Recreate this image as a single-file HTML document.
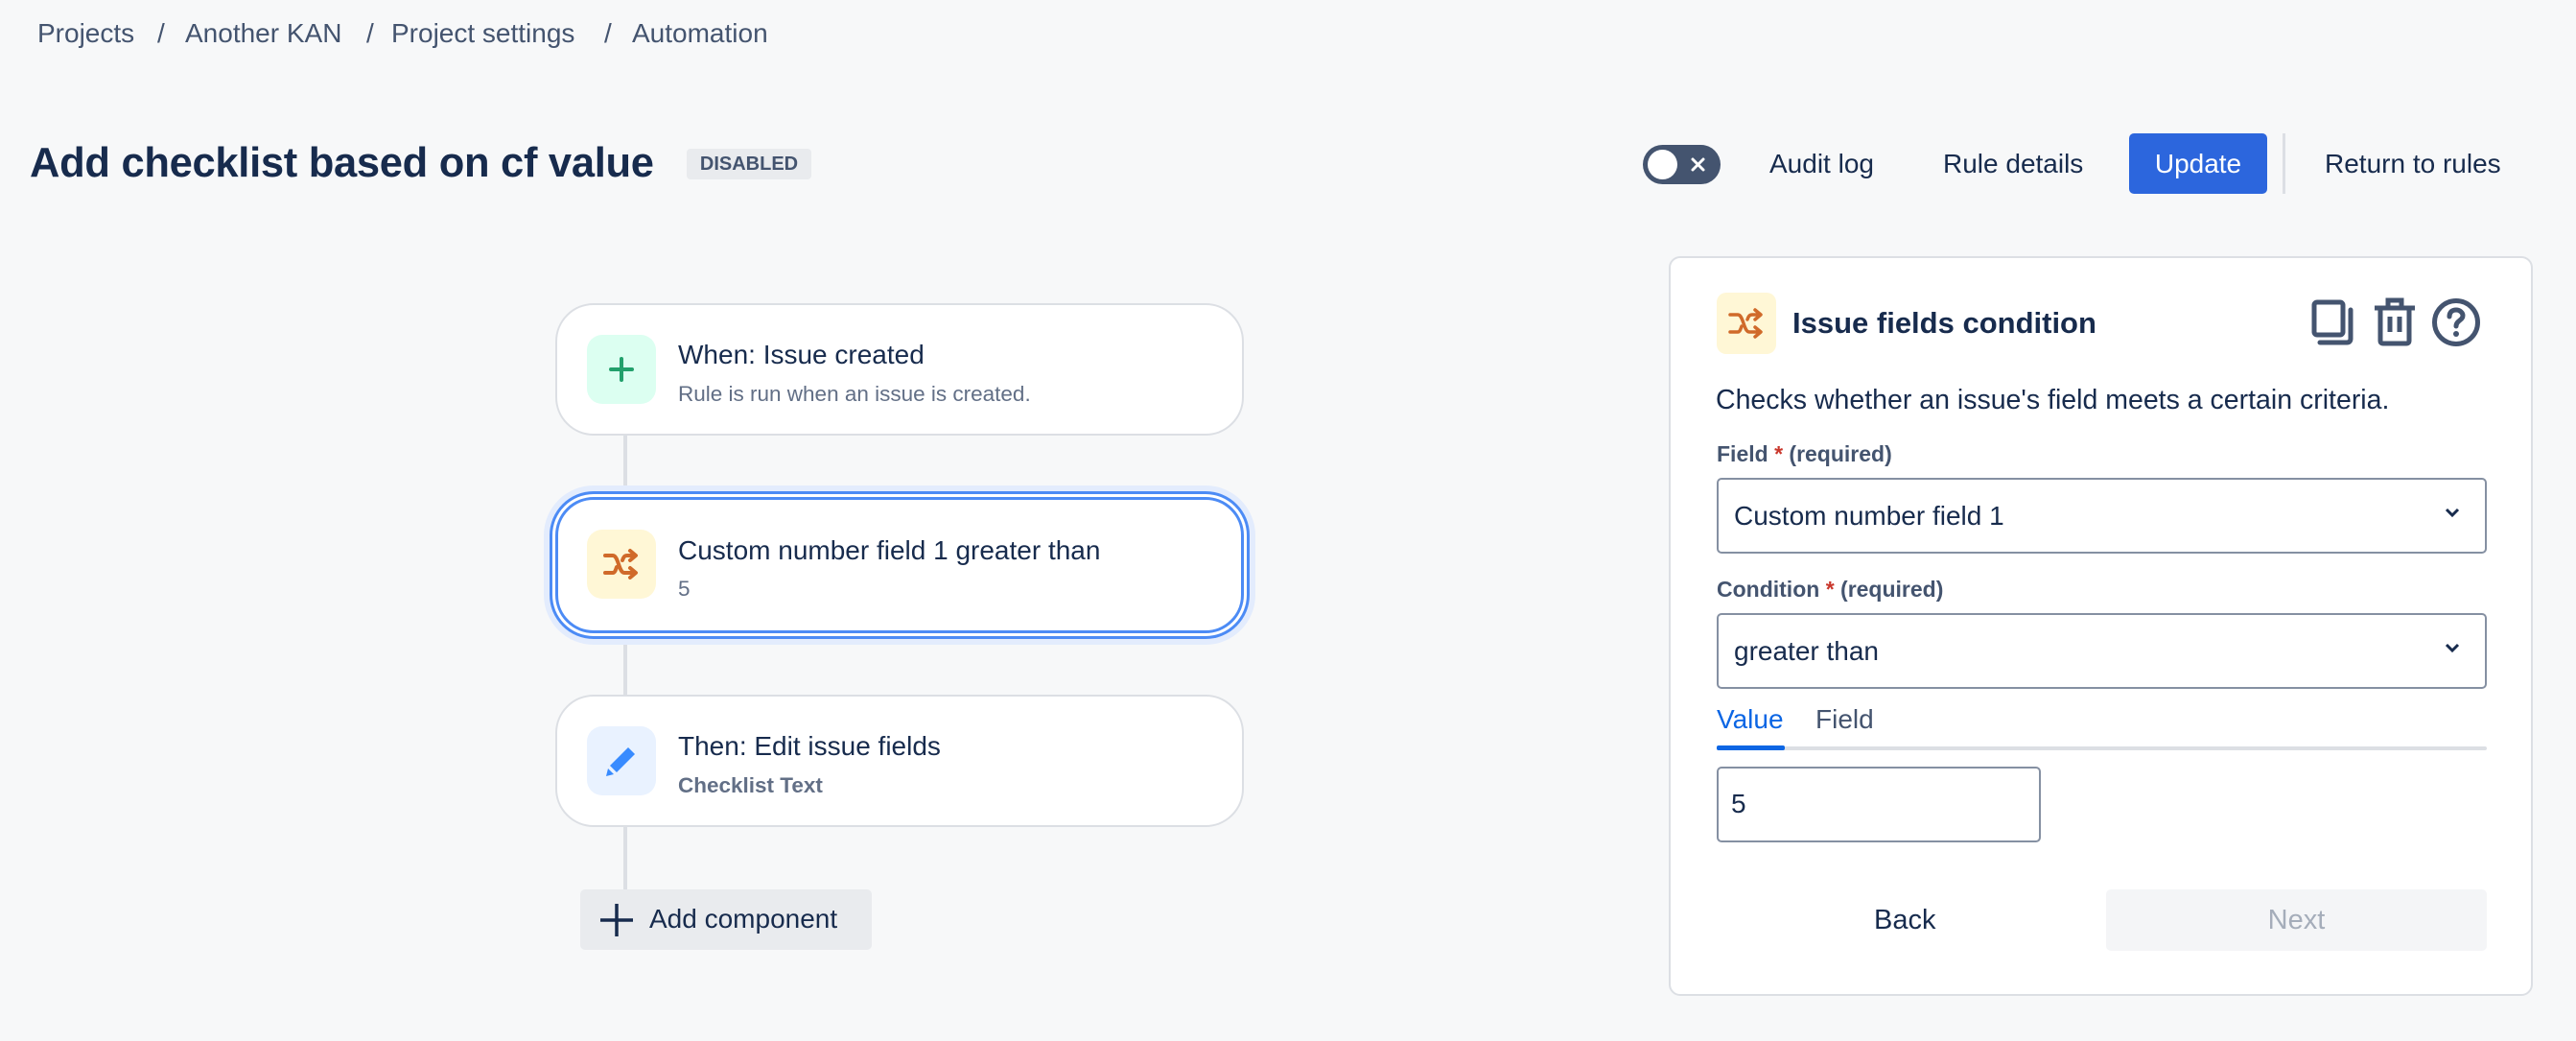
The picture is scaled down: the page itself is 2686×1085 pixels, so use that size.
<!DOCTYPE html>
<html><head><meta charset="utf-8"><style>
*{box-sizing:border-box;margin:0;padding:0}
body{width:2686px;height:1085px;background:#F7F8F9;font-family:"Liberation Sans",sans-serif;color:#172B4D;position:relative;overflow:hidden}
.a{position:absolute;white-space:nowrap}
.bc{font-size:28px;color:#44546F;top:19px}
.nav{font-size:28px;color:#172B4D;top:155px}
.card{position:absolute;left:579px;width:718px;background:#fff;border:2px solid #DCDFE4;border-radius:40px}
.ib{position:absolute;left:31px;width:72px;height:72px;border-radius:16px;display:flex;align-items:center;justify-content:center}
.ct{position:absolute;left:126px;font-size:28px;color:#172B4D;white-space:nowrap}
.cs{position:absolute;left:126px;font-size:22.5px;color:#626F86;white-space:nowrap}
.line{position:absolute;left:650px;width:4px;background:#DCDFE4}
.lbl{font-size:23px;font-weight:bold;color:#44546F;left:1790px}
.lbl i{font-style:normal;color:#C9372C}
.sel{position:absolute;left:1790px;width:803px;height:79px;border:2px solid #8590A2;border-radius:5px;background:#fff}
.sel span{position:absolute;left:16px;top:22px;font-size:28px;color:#172B4D}
.sel svg{position:absolute;right:26px;top:28px}
</style></head><body>
<div class="a bc" style="left:39px">Projects</div>
<div class="a bc" style="left:164px">/</div>
<div class="a bc" style="left:193px">Another KAN</div>
<div class="a bc" style="left:382px">/</div>
<div class="a bc" style="left:408px">Project settings</div>
<div class="a bc" style="left:630px">/</div>
<div class="a bc" style="left:659px">Automation</div>

<div class="a" style="left:31px;top:146px;font-size:43.5px;font-weight:bold;letter-spacing:-0.3px;color:#172B4D">Add checklist based on cf value</div>
<div class="a" style="left:716px;top:155px;width:130px;height:32px;background:#E9EBEE;border-radius:4px;font-size:20px;font-weight:bold;color:#44546F;text-align:center;line-height:32px">DISABLED</div>

<div class="a" style="left:1713px;top:151px;width:81px;height:41px;border-radius:21px;background:#44546F"></div>
<div class="a" style="left:1718px;top:156px;width:31px;height:31px;border-radius:50%;background:#fff"></div>
<svg class="a" style="left:1762px;top:163px" width="17" height="17" viewBox="0 0 17 17"><path d="M3 3L14 14M14 3L3 14" stroke="#fff" stroke-width="3" stroke-linecap="round"/></svg>
<div class="a nav" style="left:1845px">Audit log</div>
<div class="a nav" style="left:2026px">Rule details</div>
<div class="a" style="left:2220px;top:139px;width:144px;height:63px;background:#2C66DD;border-radius:5px;color:#fff;font-size:28px;text-align:center;line-height:63px">Update</div>
<div class="a" style="left:2380px;top:139px;width:3px;height:63px;background:#DCDFE4"></div>
<div class="a nav" style="left:2424px">Return to rules</div>

<div class="line" style="top:452px;height:70px"></div>
<div class="line" style="top:655px;height:72px"></div>
<div class="line" style="top:860px;height:70px"></div>

<div class="card" style="top:316px;height:138px">
 <div class="ib" style="top:31px;background:#DCFFF1"><svg width="30" height="30" viewBox="0 0 30 30"><path d="M15 4V26M4 15H26" stroke="#22A06B" stroke-width="4" stroke-linecap="round"/></svg></div>
 <div class="ct" style="top:36px">When: Issue created</div>
 <div class="cs" style="top:80px">Rule is run when an issue is created.</div>
</div>
<div class="card" style="top:518px;height:142px;border:3px solid #4C8BF5;box-shadow:0 0 0 3px #fff,0 0 0 6px #4C8BF5,0 0 0 12px #E3ECFD">
 <div class="ib" style="top:31px;left:30px;background:#FFF7D6"><svg width="40" height="36" viewBox="0 0 40 36"><path d="M3 9H11C17 9 17 27 23 27H34M3 27H11C13 27 14 24 15 21M21 14C22 11 23 9 26 9H34M29 4L35 9L29 14M29 22L35 27L29 32" fill="none" stroke="#D06A2A" stroke-width="4" stroke-linecap="round" stroke-linejoin="round"/></svg></div>
 <div class="ct" style="top:37px;left:125px">Custom number field 1 greater than</div>
 <div class="cs" style="top:80px;left:125px">5</div>
</div>
<div class="card" style="top:724px;height:138px">
 <div class="ib" style="top:31px;background:#E9F2FF"><svg width="40" height="40" viewBox="0 0 40 40"><path d="M27 6L34 13L15 32L8 25Z" fill="#388BFF"/><path d="M6 28L12 34L4 36Z" fill="#388BFF"/></svg></div>
 <div class="ct" style="top:36px">Then: Edit issue fields</div>
 <div class="cs" style="top:80px;font-weight:bold">Checklist Text</div>
</div>

<div class="a" style="left:605px;top:927px;width:304px;height:63px;background:#E9EBEE;border-radius:5px"></div>
<svg class="a" style="left:624px;top:940px" width="38" height="38" viewBox="0 0 38 38"><path d="M19 2V36M2 19H36" stroke="#172B4D" stroke-width="3.5"/></svg>
<div class="a" style="left:677px;top:942px;font-size:28px;color:#172B4D">Add component</div>

<div class="a" style="left:1740px;top:267px;width:901px;height:771px;background:#fff;border:2px solid #DCDFE4;border-radius:12px"></div>
<div class="a" style="left:1790px;top:305px;width:62px;height:64px;background:#FFF7D6;border-radius:10px;display:flex;align-items:center;justify-content:center"><svg width="40" height="36" viewBox="0 0 40 36"><path d="M3 9H11C17 9 17 27 23 27H34M3 27H11C13 27 14 24 15 21M21 14C22 11 23 9 26 9H34M29 4L35 9L29 14M29 22L35 27L29 32" fill="none" stroke="#D06A2A" stroke-width="3.5" stroke-linecap="round" stroke-linejoin="round"/></svg></div>
<div class="a" style="left:1869px;top:319px;font-size:31px;font-weight:bold;color:#172B4D">Issue fields condition</div>
<svg class="a" style="left:2409px;top:311px" width="48" height="50" viewBox="0 0 48 50"><rect x="4" y="4" width="30" height="34" rx="3" fill="none" stroke="#44546F" stroke-width="5"/><path d="M42 12V42C42 44 41 46 38 46H10" fill="none" stroke="#44546F" stroke-width="5" stroke-linecap="round"/></svg>
<svg class="a" style="left:2474px;top:308px" width="46" height="54" viewBox="0 0 46 54"><path d="M2 13H44M16 13V5H30V13M8 13V47C8 49 9 50 11 50H35C37 50 38 49 38 47V13M18 22V38M28 22V38" fill="none" stroke="#44546F" stroke-width="5"/></svg>
<svg class="a" style="left:2535px;top:310px" width="52" height="52" viewBox="0 0 52 52"><circle cx="26" cy="26" r="22.5" fill="none" stroke="#44546F" stroke-width="5"/><path d="M19 20C19 15 22 13 26 13C30 13 33 16 33 19C33 24 26 24 26 30" fill="none" stroke="#44546F" stroke-width="5" stroke-linecap="round"/><circle cx="26" cy="38" r="3" fill="#44546F"/></svg>

<div class="a" style="left:1789px;top:401px;font-size:28.5px;color:#172B4D">Checks whether an issue's field meets a certain criteria.</div>
<div class="a lbl" style="top:460px">Field <i>*</i> (required)</div>
<div class="sel" style="top:498px"><span>Custom number field 1</span><svg width="16" height="12" viewBox="0 0 16 12"><path d="M2 3L8 9L14 3" fill="none" stroke="#172B4D" stroke-width="3"/></svg></div>
<div class="a lbl" style="top:601px">Condition <i>*</i> (required)</div>
<div class="sel" style="top:639px"><span>greater than</span><svg width="16" height="12" viewBox="0 0 16 12"><path d="M2 3L8 9L14 3" fill="none" stroke="#172B4D" stroke-width="3"/></svg></div>
<div class="a" style="left:1790px;top:734px;font-size:28px;color:#0C66E4">Value</div>
<div class="a" style="left:1893px;top:734px;font-size:28px;color:#44546F">Field</div>
<div class="a" style="left:1790px;top:778px;width:803px;height:4px;background:#DCDFE4;border-radius:2px"></div>
<div class="a" style="left:1790px;top:777px;width:71px;height:5px;background:#0C66E4;border-radius:2px"></div>
<div class="a" style="left:1790px;top:799px;width:338px;height:79px;border:2px solid #8590A2;border-radius:5px;background:#fff"></div>
<div class="a" style="left:1805px;top:822px;font-size:28px;color:#172B4D">5</div>
<div class="a" style="left:1954px;top:943px;font-size:29px;color:#172B4D">Back</div>
<div class="a" style="left:2196px;top:927px;width:397px;height:64px;background:#F4F5F7;border-radius:5px;text-align:center;line-height:64px;font-size:29px;color:#A5ADBA">Next</div>
</body></html>
